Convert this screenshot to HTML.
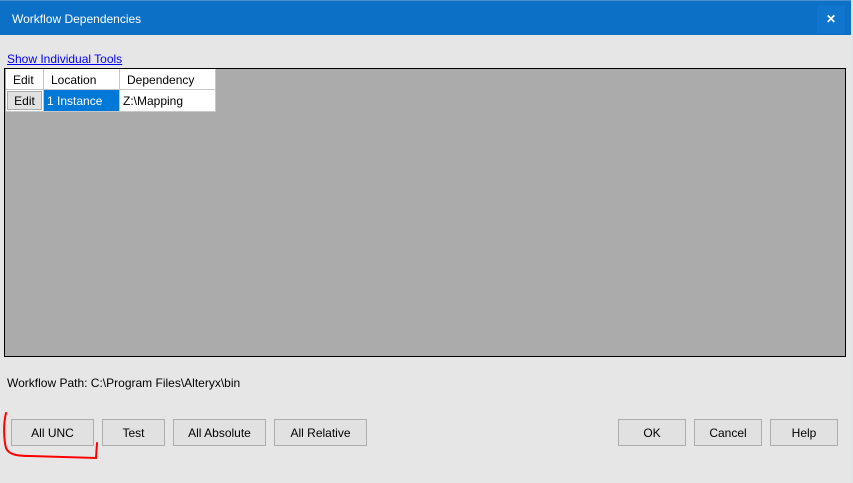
<!DOCTYPE html>
<html><head><style>
*{margin:0;padding:0;box-sizing:border-box}
body{width:853px;height:483px;background:#e6e6e6;font-family:"Liberation Sans",sans-serif;font-size:12px;color:#000;position:relative;overflow:hidden}
.abs{position:absolute}
.title{left:0;top:0;width:851px;height:35px;background:#0c70c6;border-top:1px solid #4a90d0}
.title span{position:absolute;left:12px;top:11px;color:#fff;font-size:12px}
.x{position:absolute;right:6px;top:4px;width:28px;height:28px;background:#1075cc;color:#fff;font-weight:bold;font-size:12px;text-align:center;line-height:28px}
.strip{left:851px;top:0;width:2px;height:483px;background:#dfe5ef}
.link{left:7px;top:52px;color:#0000ee;text-decoration:underline}
.grid{left:4px;top:68px;width:842px;height:289px;background:#ababab;border:1px solid #000}
.cell{position:absolute;background:#fff;height:21px;line-height:22px;padding-left:7px;border-right:1px solid #c8c8c8;border-bottom:1px solid #c8c8c8}
.btn{position:absolute;top:419px;height:27px;border:1px solid #adadad;background:#e1e1e1;text-align:center;line-height:27px}
</style></head><body>
<div class="abs title"><span>Workflow Dependencies</span><div class="x">✕</div></div>
<div class="abs strip"></div>
<div class="abs link">Show Individual Tools</div>
<div class="abs grid">
<div class="cell" style="left:1px;top:0;width:38px">Edit</div>
<div class="cell" style="left:39px;top:0;width:76px">Location</div>
<div class="cell" style="left:115px;top:0;width:96px">Dependency</div>
<div class="cell" style="left:1px;top:21px;width:38px;height:22px;padding:1px"><div style="border:1px solid #adadad;background:#e1e1e1;height:19px;line-height:19px;text-align:center">Edit</div></div>
<div class="cell" style="left:39px;top:21px;width:76px;height:22px;background:#0078d7;color:#fff;line-height:23px;padding-left:3px">1 Instance</div>
<div class="cell" style="left:115px;top:21px;width:96px;height:22px;line-height:23px;padding-left:3px">Z:\Mapping</div>
</div>
<div class="abs" style="left:7px;top:376px">Workflow Path: C:\Program Files\Alteryx\bin</div>
<div class="btn" style="left:11px;width:83px">All UNC</div>
<div class="btn" style="left:102px;width:63px">Test</div>
<div class="btn" style="left:173px;width:93px">All Absolute</div>
<div class="btn" style="left:274px;width:93px">All Relative</div>
<div class="btn" style="left:618px;width:68px">OK</div>
<div class="btn" style="left:694px;width:68px">Cancel</div>
<div class="btn" style="left:770px;width:68px">Help</div>
<svg class="abs" style="left:0;top:0" width="853" height="483"><path d="M6 413 C3 425 4 440 6 448 C9 455 18 456 30 456 L96 458 L97 443" fill="none" stroke="#f00" stroke-width="2" stroke-linecap="round"/></svg>
</body></html>
